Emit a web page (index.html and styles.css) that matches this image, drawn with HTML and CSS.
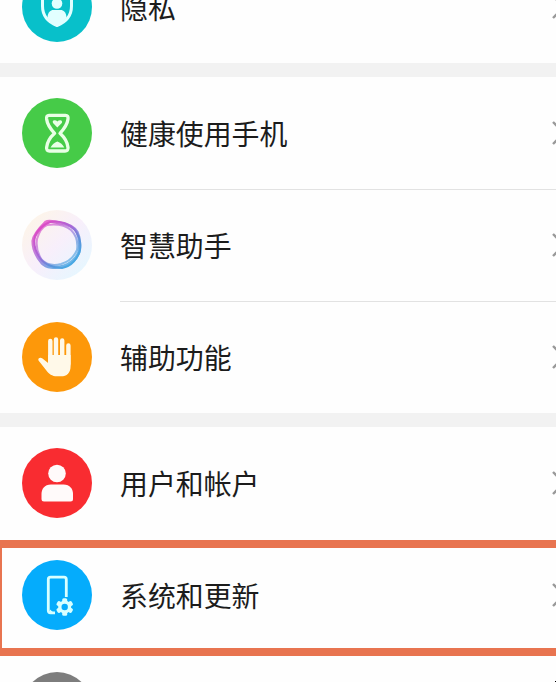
FILE: index.html
```
<!DOCTYPE html>
<html lang="zh-CN">
<head>
    <meta charset="UTF-8">
    <meta name="viewport" content="width=device-width, initial-scale=1.0">
    <title>设置</title>
    <link rel="stylesheet" href="styles.css">
</head>
<body>
    <main class="settings">
        <section class="group">
            <div class="row">
                <svg class="icon" viewBox="0 0 70 70">
                    <circle cx="35" cy="35" r="35" fill="#08c0ca"/>
                    <path d="M35 14 L49.500 19 V34 C49.500 44 44 50 35 53.500 C26 50 20.500 44 20.500 34 V19 Z" fill="none" stroke="#e2ffff" stroke-width="3"/>
                    <circle cx="35" cy="31.500" r="5.300" fill="#e2ffff"/>
                    <path d="M25.500 46 C25.500 40 29 38 31 38 H39 C41 38 44.500 40 44.500 46 C42 49 39 51 35 53 C31 51 28 49 25.500 46 Z" fill="#e2ffff"/>
                </svg>
                <div class="content">
                    <span class="label">隐私</span>
                    <svg class="arrow" viewBox="0 0 14 24"><path d="M1 1 L12 12 L1 23"/></svg>
                </div>
            </div>
        </section>

        <section class="group">
            <div class="row">
                <svg class="icon" viewBox="0 0 70 70">
                    <circle cx="35" cy="35" r="35" fill="#46cb48"/>
                    <path d="M27 17.300 H43.500 Q46.500 17.300 46 21 C45.300 27 42 31 38 35.300 C42 39 45.500 44 46 49.500 Q46.300 53 43 53 H27.500 Q24.300 53 24.600 49.500 C25.200 44 28.500 39 32.600 35.300 C28.500 31 25.300 27 24.600 21 Q24.300 17.300 27 17.300 Z" fill="none" stroke="#e9ffe6" stroke-width="3.300" stroke-linejoin="round"/>
                    <path d="M35.300 29.500 L31 25 Q30 22.500 32.500 22.300 Q34.500 22.300 35.300 23.500 Q36.500 22.300 38.300 22.300 Q40.800 22.800 39.800 25 Z M28.500 49.500 Q31 45 35.300 43.500 Q40 45 42.300 49.500 Z" fill="#e9ffe6"/>
                </svg>
                <div class="content">
                    <span class="label">健康使用手机</span>
                    <svg class="arrow" viewBox="0 0 14 24"><path d="M1 1 L12 12 L1 23"/></svg>
                </div>
            </div>
            <div class="row">
                <svg class="icon" viewBox="0 0 70 70">
                    <defs>
                        <linearGradient id="halo" x1="0" y1="0" x2="1" y2="1">
                            <stop offset="0.100" stop-color="#fdf5e8"/>
                            <stop offset="0.500" stop-color="#f8effb"/>
                            <stop offset="0.900" stop-color="#e5f7ff"/>
                        </linearGradient>
                        <linearGradient id="ring" gradientUnits="userSpaceOnUse" x1="18" y1="16" x2="50" y2="52">
                            <stop offset="0" stop-color="#e04bc6"/>
                            <stop offset="0.450" stop-color="#a568d8"/>
                            <stop offset="0.750" stop-color="#5b91db"/>
                            <stop offset="1" stop-color="#49a8e3"/>
                        </linearGradient>
                    </defs>
                    <circle cx="35" cy="35" r="35" fill="url(#halo)"/>
                    <g fill="none" stroke="url(#ring)">
                        <path d="M24 12 C27 10 32 12 38 13 C45 14 52 17 55 22 C58 28 58 36 57 42 C54 50 48 54 42 56 C33 59 24 57 20 53 C14 46 11 38 11 31 C12 24 19 17 24 12 Z" stroke-width="3.200" opacity="0.800"/>
                        <path d="M28 12 C37 10 48 14 53 20 C58 27 59 34 58 40 C56 48 50 56 40 58 C31 58 22 54 18 48 C13 41 11 34 13 26 C16 19 23 14 28 12 Z" stroke-width="2"/>
                        <path d="M25 15 C33 14 43 15 49 20 C54 25 56 33 55 40 C52 47 46 52 39 54 C31 56 24 54 20 50 C15 43 14 36 15 29 C17 22 20 17 25 15 Z" stroke-width="2" opacity="0.650"/>
                    </g>
                </svg>
                <div class="content">
                    <span class="label">智慧助手</span>
                    <svg class="arrow" viewBox="0 0 14 24"><path d="M1 1 L12 12 L1 23"/></svg>
                </div>
            </div>
            <div class="row">
                <svg class="icon" viewBox="0 0 70 70">
                    <circle cx="35" cy="35" r="35" fill="#fd980a"/>
                    <path d="M28.300 19 V40 M34 17.500 V40 M40.200 18.500 V40 M46.400 23.500 V42" stroke="#fff9e9" stroke-width="4.400" stroke-linecap="round"/>
                    <path d="M26.100 33 H48.600 V44 C48.600 51 45 54.300 39 54.300 H35 C30 54.300 27 52 24 48 L16.500 38.500 C15.500 36 18.500 35 20.500 36.500 L26.100 41 Z" fill="#fff9e9"/>
                </svg>
                <div class="content">
                    <span class="label">辅助功能</span>
                    <svg class="arrow" viewBox="0 0 14 24"><path d="M1 1 L12 12 L1 23"/></svg>
                </div>
            </div>
        </section>

        <section class="group">
            <div class="row">
                <svg class="icon" viewBox="0 0 70 70">
                    <circle cx="35" cy="35" r="35" fill="#f92c31"/>
                    <circle cx="35" cy="25.500" r="8.800" fill="#fffafa"/>
                    <path d="M29 36.500 H41.500 C48 36.500 51 41 51 46 V51 Q51 53.500 48.500 53.500 H22 Q19.500 53.500 19.500 51 V46 C19.500 41 22.500 36.500 29 36.500 Z" fill="#fffafa"/>
                </svg>
                <div class="content">
                    <span class="label">用户和帐户</span>
                    <svg class="arrow" viewBox="0 0 14 24"><path d="M1 1 L12 12 L1 23"/></svg>
                </div>
            </div>
            <div class="row highlighted">
                <svg class="icon" viewBox="0 0 70 70">
                    <circle cx="35" cy="35" r="35" fill="#05acfc"/>
                    <path d="M33 52.800 H28.500 Q26.300 52.800 26.300 50.500 V19.500 Q26.300 17.200 28.500 17.200 H42 Q44.300 17.200 44.300 19.500 V37" fill="none" stroke="#d8ffff" stroke-width="2.800"/>
                    <path d="M28 49.500 L32.500 53.500 H28 Z" fill="#d8ffff"/>
                    <g transform="translate(42.700 47)" fill="#d8ffff">
                        <rect x="-2.500" y="-8.700" width="5" height="17.400" rx="1.500"/>
                        <rect x="-2.500" y="-8.700" width="5" height="17.400" rx="1.500" transform="rotate(60)"/>
                        <rect x="-2.500" y="-8.700" width="5" height="17.400" rx="1.500" transform="rotate(120)"/>
                        <circle r="6.500"/>
                        <circle r="3.200" fill="#05acfc"/>
                    </g>
                </svg>
                <div class="content">
                    <span class="label">系统和更新</span>
                    <svg class="arrow" viewBox="0 0 14 24"><path d="M1 1 L12 12 L1 23"/></svg>
                </div>
            </div>
            <div class="row">
                <svg class="icon" viewBox="0 0 70 70">
                    <circle cx="35" cy="35" r="35" fill="#7d7d7d"/>
                </svg>
                <div class="content"></div>
            </div>
        </section>
    </main>
    <span class="corner"></span>
</body>
</html>
```
FILE: styles.css
```
body {
    margin: 0;
    position: relative;
    background-color: #f2f2f2;
    font-family: "Noto Sans CJK SC", sans-serif;
    color: #1c1c1c;
}
/* the list is scrolled, the first row is partly out of view */
.settings {
    display: flex;
    flex-direction: column;
    gap: 14px;
    height: 731px;
    margin-top: -49px;
    overflow: hidden;
}
.group {
    flex: none;
    background-color: #fefefe;
}
.row {
    display: flex;
    align-items: center;
    gap: 28px;
    height: 112px;
    padding-left: 22px;
    box-sizing: border-box;
    position: relative;
}
.icon {
    width: 70px;
    height: 70px;
    flex: none;
}
.content {
    display: flex;
    align-items: center;
    justify-content: space-between;
    flex: 1;
    height: 100%;
    box-shadow: 0 1px 0 #e2e2e2;
}
.row:last-child .content,
.highlighted .content {
    box-shadow: none;
}
.label {
    font-size: 27.9px;
    line-height: 40px;
    white-space: nowrap;
}
.arrow {
    width: 14px;
    height: 24px;
    flex: none;
    margin-right: -9.5px;
    fill: none;
    stroke: #999;
    stroke-width: 2.4;
}

/* Frame around the selected row */
.highlighted {
    background-color: #fefefe;
}
.highlighted::after {
    content: "";
    position: absolute;
    top: 1px;
    left: 0;
    right: 0;
    height: 116px;
    box-sizing: border-box;
    border: 8px solid #e87450;
    border-left-width: 2px;
    border-right: none;
    z-index: 1;
}
.corner {
    position: absolute;
    right: 0;
    bottom: 0;
    width: 1px;
    height: 1px;
    background-color: #000;
}
```
